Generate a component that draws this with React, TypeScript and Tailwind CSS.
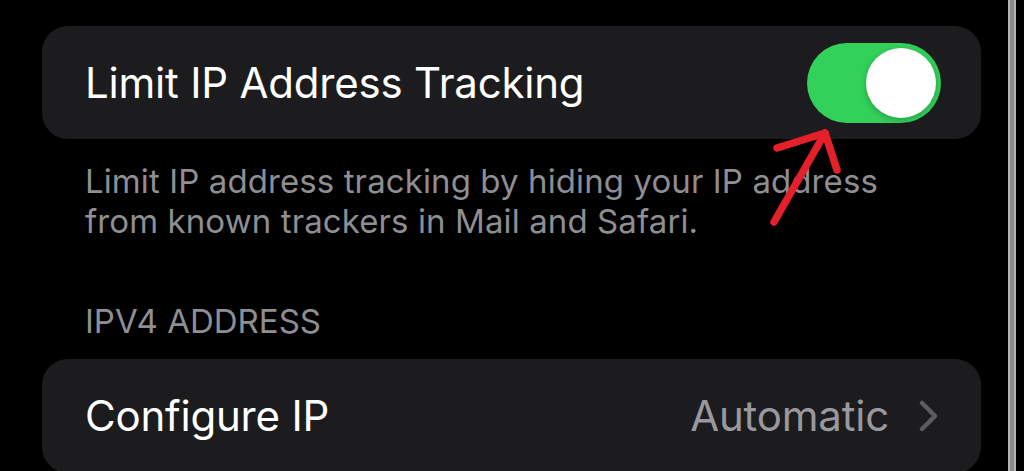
import React from 'react';

const Toggle: React.FC = () => (
  <div className="w-[134px] h-[80px] rounded-full bg-[#32d15a] flex items-center justify-end pr-[5px]">
    <div className="w-[70px] h-[70px] rounded-full bg-white shadow-[0_2px_6px_rgba(0,0,0,0.25)]" />
  </div>
);

const Chevron: React.FC = () => (
  <svg width="20" height="32" viewBox="0 0 20 32" fill="none">
    <path d="M3 3 L16 16 L3 29" stroke="#5b5b60" strokeWidth="4.5" strokeLinecap="round" strokeLinejoin="round" />
  </svg>
);

const App: React.FC = () => {
  return (
    <div className="relative w-[1024px] h-[471px] overflow-hidden bg-black flex font-['Inter','Liberation_Sans',sans-serif]">
      {/* Settings content */}
      <div className="w-[1008px] pl-[42px] pt-[26px] flex flex-col">
        {/* Toggle row */}
        <div className="w-[939px] h-[113px] shrink-0 rounded-[26px] bg-[#1c1c1e] flex items-center justify-between pl-[43px] pr-[40px]">
          <span className="text-[42px] leading-none text-white tracking-[-0.2px]">Limit IP Address Tracking</span>
          <Toggle />
        </div>

        {/* Footer text */}
        <p className="mt-[22px] pl-[43px] text-[33px] leading-[40px] text-[#8e8e93] tracking-[0.1px]">
          Limit IP address tracking by hiding your IP address
          <br />
          from known trackers in Mail and Safari.
        </p>

        {/* Section header */}
        <p className="mt-[60px] pl-[43px] text-[33px] leading-[40px] text-[#8e8e93]">IPV4 ADDRESS</p>

        {/* Configure IP row */}
        <div className="mt-[18px] w-[939px] h-[114px] shrink-0 rounded-[26px] bg-[#1c1c1e] flex items-center justify-between pl-[43px] pr-[42px]">
          <span className="text-[42px] leading-none text-white tracking-[-0.2px]">Configure IP</span>
          <div className="flex items-center gap-[30px]">
            <span className="text-[42px] leading-none text-[#98989e] tracking-[-0.2px]">Automatic</span>
            <Chevron />
          </div>
        </div>
      </div>

      {/* Scrollbar edge */}
      <div className="w-[8px] h-full bg-[#8a8a8a] border-x-2 border-[#b4b4b4]" />

      {/* Red hand-drawn arrow */}
      <svg className="absolute left-[760px] top-[120px]" width="100" height="120" viewBox="0 0 100 120" fill="none">
        <path d="M14 102 L65 13" stroke="#e5202b" strokeWidth="7.5" strokeLinecap="round" />
        <path d="M17 28 L65 13 L77 50" stroke="#e5202b" strokeWidth="7.5" strokeLinecap="round" strokeLinejoin="round" />
      </svg>
    </div>
  );
};

export default App;
